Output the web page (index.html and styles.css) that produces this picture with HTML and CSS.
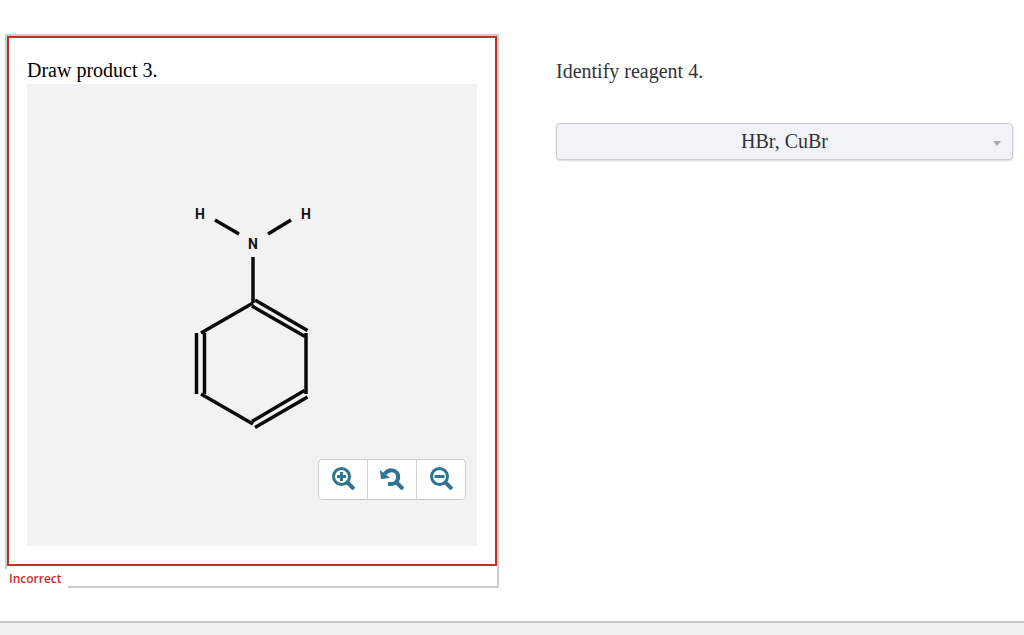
FILE: index.html
```html
<!DOCTYPE html>
<html lang="en">

<head>
    <meta charset="UTF-8">
    <meta name="viewport" content="width=device-width, initial-scale=1.0">
    <title>Reaction products</title>
    <link rel="stylesheet" href="styles.css">
</head>

<body>
    <main class="questions">
        <section class="answer-box">
            <div class="answer-inner">
                <p class="prompt">Draw product 3.</p>
                <div class="canvas">
                    <svg class="molecule" viewBox="0 0 450 462" role="img" aria-label="Aniline">
                        <g class="bonds">
                            <path d="M188 136L212 150M264 136L241 150M226 173V219" />
                            <path d="M228 216L280.500 246.500M225 222L278 252.500" />
                            <path d="M279 249V310" />
                            <path d="M277.500 306.500L225 337.500M280.500 313L228 343.500" />
                            <path d="M226 340L174 310" />
                            <path d="M169.500 310V249M177.500 310V249" />
                            <path d="M174 249L226 219" />
                        </g>
                        <text x="173" y="135">H</text>
                        <text x="279" y="135">H</text>
                        <text x="226" y="165">N</text>
                    </svg>
                    <div class="zoom-buttons">
                        <button type="button" aria-label="Zoom in">
                            <svg viewBox="0 0 24 24">
                                <circle cx="10.500" cy="10.500" r="8" />
                                <path d="M16 16L23 23" class="handle" />
                                <path d="M6 10.500H15M10.500 6V15" />
                            </svg>
                        </button>
                        <button type="button" aria-label="Reset zoom">
                            <svg viewBox="0 0 24 24">
                                <path d="M5 8C8 3 16 3 18 9C19 14 16 18 11 18H8" class="loop" />
                                <path d="M16 16L23 23" class="handle" />
                                <path d="M0 4L1 13L10 12Z" class="arrow" />
                            </svg>
                        </button>
                        <button type="button" aria-label="Zoom out">
                            <svg viewBox="0 0 24 24">
                                <circle cx="10.500" cy="10.500" r="8" />
                                <path d="M16 16L23 23" class="handle" />
                                <path d="M5.500 10.500H15.500" />
                            </svg>
                        </button>
                    </div>
                </div>
            </div>
            <span class="status">Incorrect</span>
        </section>

        <section class="reagent">
            <label class="prompt" for="reagent4">Identify reagent 4.</label>
            <div class="select-wrap">
                <select id="reagent4" name="reagent4">
                    <option>HBr, CuBr</option>
                </select>
                <svg class="caret" viewBox="0 0 8 5">
                    <path d="M0 0H8L4 5Z" />
                </svg>
            </div>
        </section>
    </main>
    <footer class="page-footer"></footer>
</body>

</html>
```

FILE: styles.css
```css
* {
    box-sizing: border-box;
}

body {
    display: flex;
    flex-direction: column;
    min-height: 100vh;
    margin: 0;
    background: #fff;
    color: #333;
    font-family: "Liberation Serif", "Times New Roman", serif;
    font-size: 20px;
    line-height: 24px;
}

.questions {
    display: grid;
    grid-template-columns: 494fr 457fr;
    align-items: start;
    gap: 57px;
    padding: 34px 11px 33px 5px;
}

.prompt {
    display: block;
    margin: 0;
}

.answer-box {
    position: relative;
    padding-bottom: 20px;
    border: 2px solid #ccc;
}

.answer-inner {
    padding: 20px 18px 18px;
    border: 2px solid #c42e2e;
    color: #000;
}

.answer-inner .prompt {
    padding-bottom: 2px;
}

.canvas {
    position: relative;
    background: #f2f2f2;
}

.molecule {
    display: block;
    width: 100%;
}

.molecule text {
    fill: #111;
    font: bold 14px Roboto, sans-serif;
    text-anchor: middle;
}

.bonds {
    fill: none;
    stroke: #0a0a0a;
    stroke-width: 3.5;
}

.zoom-buttons {
    position: absolute;
    right: 11px;
    bottom: 46px;
    display: flex;
    border: 1px solid #ccc;
    border-radius: 4px;
    background: #fff;
    overflow: hidden;
}

.zoom-buttons button {
    box-sizing: content-box;
    width: 48px;
    height: 35px;
    padding: 0 0 4px;
    border: 0;
    background: none;
    cursor: pointer;
}

.zoom-buttons button + button {
    border-left: 1px solid #d4d4d4;
}

.zoom-buttons svg {
    display: block;
    width: 24px;
    height: 24px;
    margin: 0 auto;
    fill: none;
    stroke: #31748f;
    stroke-width: 3;
}

.zoom-buttons .handle,
.zoom-buttons .loop {
    stroke-width: 4;
}

.zoom-buttons .arrow {
    fill: #31748f;
    stroke: none;
}

/* sits over the bottom left corner of the box border */
.status {
    position: absolute;
    left: -2px;
    bottom: -2px;
    padding: 0 6px 0 4px;
    background: #fff;
    color: #c42e2e;
    font: 600 12px/19px "Open Sans", sans-serif;
}

.reagent {
    padding-top: 25px;
}

.select-wrap {
    position: relative;
    margin-top: 40px;
}

.select-wrap select {
    display: block;
    width: 100%;
    height: 37px;
    padding: 0 16px 2px;
    border: 1px solid #ccc;
    border-radius: 4px;
    background: #f2f3f8;
    box-shadow: 0 1px 2px rgba(0, 0, 0, 0.15);
    color: #333;
    font: inherit;
    text-align: center;
    text-align-last: center;
    appearance: none;
}

.caret {
    position: absolute;
    right: 12px;
    top: 18px;
    width: 8px;
    height: 5px;
    fill: #aaa;
    pointer-events: none;
}

.page-footer {
    flex: 1;
    border-top: 2px solid #c6c6c6;
    background: #f1f1f1;
}
```
